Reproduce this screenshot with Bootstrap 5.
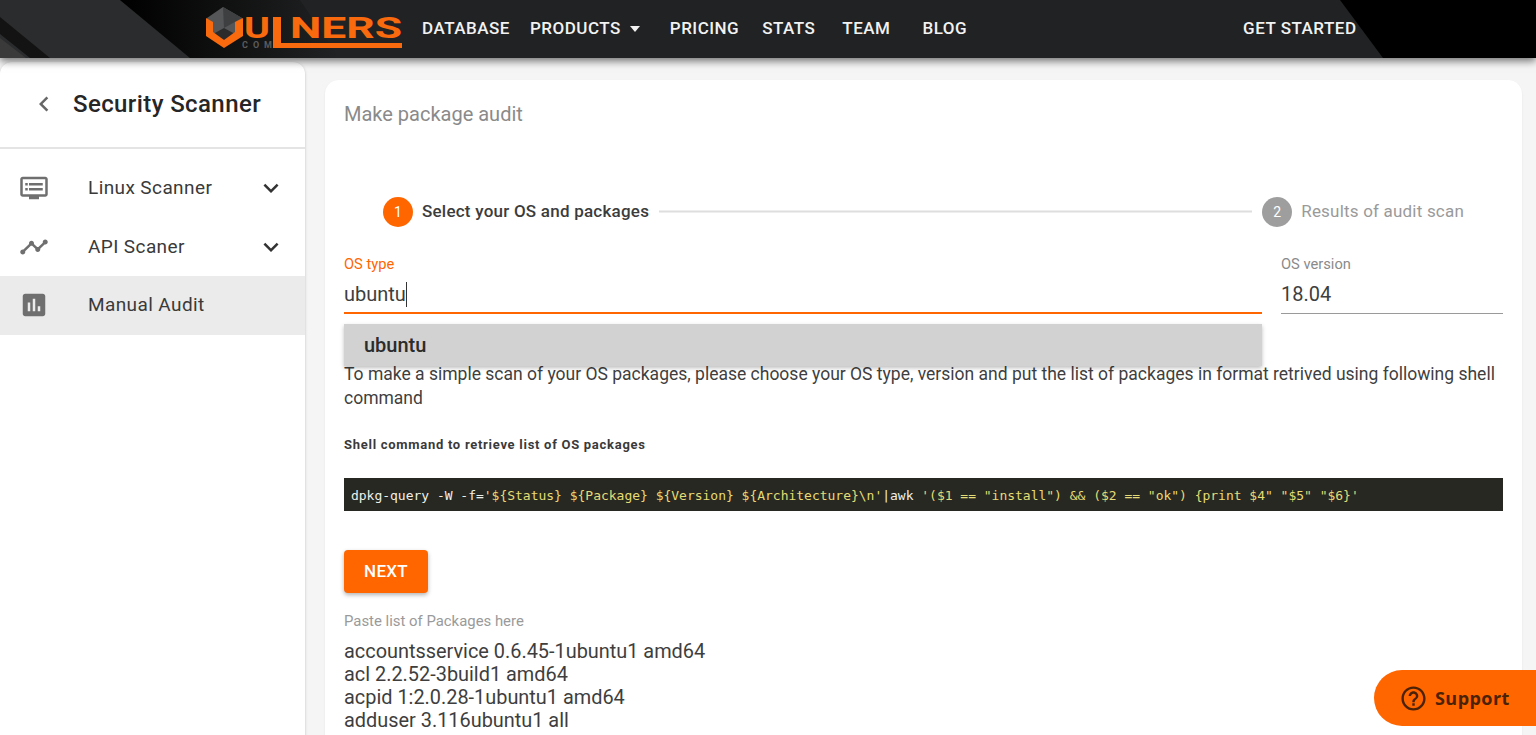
<!DOCTYPE html>
<html lang="en">
<head>
<meta charset="utf-8">
<title>Security Scanner</title>
<link href="https://cdn.jsdelivr.net/npm/bootstrap@5.3.0/dist/css/bootstrap.min.css" rel="stylesheet">
<style>
html,body{height:735px;overflow:hidden}
body{background:#f5f5f5;font-family:Roboto,"Liberation Sans",sans-serif;color:#333}
.topbar{height:58px;background:#212223;box-shadow:0 3px 8px rgba(0,0,0,.55);position:relative;z-index:5;padding-left:206px}
.topbar-art{position:absolute;left:0;top:0;width:100%;height:100%}
.brand-logo{position:relative;width:198px;height:50px;margin-top:3px;margin-right:18px;flex:none}
.top-link{position:relative;color:#f2f2f2;font-size:17px;letter-spacing:.5px;font-weight:500;text-transform:uppercase;text-decoration:none;line-height:57px;white-space:nowrap}
.top-link:hover{color:#fff}
.caret-down{display:inline-block;width:0;height:0;border-left:5.5px solid transparent;border-right:5.5px solid transparent;border-top:6px solid #f2f2f2;margin-left:9px;vertical-align:2px}
.gap-a{margin-right:20px}.gap-b{margin-right:30px}.gap-c{margin-right:23px}.gap-d{margin-right:27px}.gap-e{margin-right:32px}.gap-f{margin-right:276px}
.page-wrap{height:677px;overflow:hidden}
.side-panel{width:305px;flex:none;background:#fff;margin:4px 0 0 0;border-radius:12px 12px 0 0;box-shadow:0 1px 3px rgba(0,0,0,.22);height:700px}
.side-head{height:87px;border-bottom:2px solid #e4e4e4;padding:0 0 2px 29px;margin-bottom:10px}
.side-head svg{width:30px;height:30px;fill:#666;margin-right:14px}
.side-title{font-size:24px;font-weight:500;color:#262626;line-height:1;letter-spacing:.4px}
.side-item{height:58.5px;padding:0 24px 0 19px;color:#3a3a3a;font-size:19px;letter-spacing:.4px;text-decoration:none}
.side-item.is-active{background:#ebebeb}
.side-item:hover{color:#3a3a3a}
.side-ico{width:30px;height:30px;fill:#6f6f6f;margin-right:39px;flex:none}
.side-exp{width:30px;height:30px;fill:#333;margin-left:auto;margin-right:-4.5px}
.main-card{position:relative;margin:22px 14px 0 20px;flex:1;background:#fff;border-radius:14px;box-shadow:0 1px 2px rgba(0,0,0,.08);padding:22px 19px 0 19px;height:700px}
.audit-title{font-size:20px;color:#8a8a8a;line-height:24px;margin-bottom:71px}
.step-row{padding-left:39px;padding-right:39px;height:30px;margin-bottom:29px}
.step-num{width:30px;height:30px;border-radius:50%;color:#fff;font-size:14px;flex:none}
.step-on{background:#ff6600}.step-off{background:#9e9e9e}
.step-lbl{font-size:17px;font-weight:500;color:#3c3c3c;margin-left:9px;white-space:nowrap;letter-spacing:.23px}
.step-lbl.dim{font-weight:400;color:#9a9a9a;letter-spacing:.2px;margin-left:9px}
.step-line{flex:1;height:2px;background:#dedede;margin:0 10px;transform:translateY(-.5px)}
.fld-lbl{font-size:14.7px;line-height:16px;color:#8a8a8a;margin-bottom:8px}
.fld-lbl.is-on{color:#ff6600}
.fld-val{font-size:20px;line-height:28px;color:#3e3e3e;height:34px}
.fld-line{height:34px;border-bottom:1px solid #9a9a9a}
.fld-line.is-on{border-bottom:2px solid #ff6600}
.text-cursor{display:inline-block;width:1px;height:25px;background:#333;vertical-align:-6px}
.fld-os{width:918px;margin-right:19px;position:relative}
.fld-ver{flex:1}
.suggest{position:absolute;left:0;right:0;top:68px;height:42px;background:#d2d2d2;box-shadow:0 2px 4px rgba(0,0,0,.25);font-size:20px;font-weight:500;color:#2c2c2c;padding-left:20px;line-height:42px;z-index:3}
.intro-text{font-size:17.5px;line-height:24px;color:#3f3f3f;margin:48px 0 0}
.shell-head{font-size:13px;font-weight:700;color:#3a3a3a;margin:26px 0 0;line-height:18px;letter-spacing:.72px}
.shell-bar{background:#272822;color:#f0f0ea;font-family:"DejaVu Sans Mono","Liberation Mono",monospace;font-size:13px;letter-spacing:-.015px;height:33px;line-height:35px;padding-left:7px;margin:24px 0 0;white-space:nowrap;overflow:hidden;border-radius:0;border:0}
.shell-bar .str{color:#e6db74}
.next-btn{background:#ff6600;border:0;color:#fff;font-weight:500;font-size:17px;letter-spacing:.25px;width:84px;height:43px;border-radius:4px;box-shadow:0 2px 4px rgba(0,0,0,.3);margin-top:39px;display:block;padding:0}
.next-btn:hover{background:#ff6600;color:#fff}
.paste-lbl{font-size:14.9px;color:#9a9a9a;line-height:18px;margin-top:19px}
.pkg-list{font-size:19.9px;line-height:23px;color:#3e3e3e;margin-top:10px;white-space:pre}
.support-btn{position:fixed;left:1374px;top:670px;width:162px;height:56px;border-radius:28px 0 0 28px;background:#ff6600;color:#4b2205;font-family:"Open Sans","Noto Sans",sans-serif;font-weight:700;font-size:18px;letter-spacing:.45px;padding-left:25px;z-index:9;text-decoration:none}
.support-btn:hover{color:#4b2205}
.support-btn svg{width:29px;height:29px;fill:#4b2205;margin-right:7px}
</style>
</head>
<body>
<header class="topbar d-flex align-items-start">
  <svg class="topbar-art" viewBox="0 0 1536 58" preserveAspectRatio="none" aria-hidden="true">
    <defs><linearGradient id="fadeBlack" x1="0" x2="1" y1="0" y2="0"><stop offset="0" stop-color="#000"/><stop offset="1" stop-color="#212223"/></linearGradient></defs>
    <polygon points="0,0 120,0 190,58 0,58" fill="#2b2c2d"/>
    <polygon points="120,0 300,0 340,58 190,58" fill="url(#fadeBlack)"/>
    <polygon points="0,17 50,58 30,58 0,34" fill="#131313"/>
    <polygon points="0,38 26,58 0,58" fill="#3a3a3a"/>
    <polygon points="1340,0 1536,0 1536,58 1383,58" fill="#000"/>
  </svg>
  <svg class="brand-logo" viewBox="0 0 198 50" role="img" aria-label="Vulners">
    <polygon points="17,4 36,15 36,30 18,40 1,30 1,15" fill="#555657"/>
    <polygon points="17,4 36,15 18,25" fill="#3e3f40"/>
    <polygon points="18,25 29,31 18,38 7,31" fill="#2b2b2c"/>
    <polygon points="0,15 7,19 7,29 18,37 29,29 29,19 37,15 37,33 18,45 0,33" fill="#f96a0e"/>
    <text x="38" y="35" font-family="Roboto,sans-serif" font-weight="700" font-size="29" fill="#f96a0e" textLength="26" lengthAdjust="spacingAndGlyphs">U</text>
    <polygon points="67,14 75,14 75,40 196,40 196,45 67,45" fill="#f96a0e"/>
    <text x="84" y="35" font-family="Roboto,sans-serif" font-weight="700" font-size="29" fill="#f96a0e" textLength="112" lengthAdjust="spacingAndGlyphs">NERS</text>
    <text x="36" y="45" font-family="Roboto,sans-serif" font-weight="700" font-size="9" fill="#5c5c5c" textLength="30" lengthAdjust="spacing">COM</text>
  </svg>
  <a class="top-link gap-a" href="#">Database</a>
  <a class="top-link gap-b" href="#">Products<span class="caret-down"></span></a>
  <a class="top-link gap-c" href="#">Pricing</a>
  <a class="top-link gap-d" href="#">Stats</a>
  <a class="top-link gap-e" href="#">Team</a>
  <a class="top-link gap-f" href="#">Blog</a>
  <a class="top-link" href="#">Get started</a>
</header>
<div class="page-wrap d-flex">
  <aside class="side-panel">
    <div class="side-head d-flex align-items-center">
      <svg viewBox="0 0 24 24"><path d="M15.41 7.41L14 6l-6 6 6 6 1.41-1.41L10.83 12z"/></svg>
      <span class="side-title">Security Scanner</span>
    </div>
    <nav class="d-flex flex-column">
      <a class="side-item d-flex align-items-center" href="#">
        <svg class="side-ico" viewBox="0 0 24 24"><path d="M21 3H3c-1.1 0-2 .9-2 2v12c0 1.1.9 2 2 2h5v2h8v-2h5c1.1 0 1.99-.9 1.99-2L23 5c0-1.1-.9-2-2-2zm0 14H3V5h18v12zm-2-9H8v2h11V8zm0 4H8v2h11v-2zM7 8H5v2h2V8zm0 4H5v2h2v-2z"/></svg>
        Linux Scanner
        <svg class="side-exp" viewBox="0 0 24 24"><path d="M16.59 8.59L12 13.17 7.41 8.59 6 10l6 6 6-6z"/></svg>
      </a>
      <a class="side-item d-flex align-items-center" href="#">
        <svg class="side-ico" viewBox="0 0 24 24"><path d="M23 8c0 1.1-.9 2-2 2-.18 0-.35-.02-.51-.07l-3.56 3.55c.05.16.07.34.07.52 0 1.1-.9 2-2 2s-2-.9-2-2c0-.18.02-.36.07-.52l-2.55-2.55c-.16.05-.34.07-.52.07s-.36-.02-.52-.07l-4.55 4.56c.05.16.07.33.07.51 0 1.1-.9 2-2 2s-2-.9-2-2 .9-2 2-2c.18 0 .35.02.51.07l4.56-4.55C8.02 9.36 8 9.18 8 9c0-1.1.9-2 2-2s2 .9 2 2c0 .18-.02.36-.07.52l2.55 2.55c.16-.05.34-.07.52-.07s.36.02.52.07l3.55-3.56C19.02 8.35 19 8.18 19 8c0-1.1.9-2 2-2s2 .9 2 2z"/></svg>
        API Scaner
        <svg class="side-exp" viewBox="0 0 24 24"><path d="M16.59 8.59L12 13.17 7.41 8.59 6 10l6 6 6-6z"/></svg>
      </a>
      <a class="side-item is-active d-flex align-items-center" href="#">
        <svg class="side-ico" viewBox="0 0 24 24"><path d="M19 3H5c-1.1 0-2 .9-2 2v14c0 1.1.9 2 2 2h14c1.1 0 2-.9 2-2V5c0-1.1-.9-2-2-2zM9 17H7v-7h2v7zm4 0h-2V7h2v10zm4 0h-2v-4h2v4z"/></svg>
        Manual Audit
      </a>
    </nav>
  </aside>
  <main class="main-card">
    <div class="audit-title">Make package audit</div>
    <div class="step-row d-flex align-items-center">
      <span class="step-num step-on d-flex align-items-center justify-content-center">1</span>
      <span class="step-lbl">Select your OS and packages</span>
      <span class="step-line"></span>
      <span class="step-num step-off d-flex align-items-center justify-content-center">2</span>
      <span class="step-lbl dim">Results of audit scan</span>
    </div>
    <div class="d-flex">
      <div class="fld-os">
        <div class="fld-lbl is-on">OS type</div>
        <div class="fld-val fld-line is-on">ubuntu<span class="text-cursor"></span></div>
        <div class="suggest">ubuntu</div>
      </div>
      <div class="fld-ver">
        <div class="fld-lbl">OS version</div>
        <div class="fld-val fld-line">18.04</div>
      </div>
    </div>
    <p class="intro-text">To make a simple scan of your OS packages, please choose your OS type, version and put the list of packages in format retrived using following shell command</p>
    <p class="shell-head">Shell command to retrieve list of OS packages</p>
    <pre class="shell-bar">dpkg-query -W -f=<span class="str">'${Status} ${Package} ${Version} ${Architecture}\n'</span>|awk <span class="str">'($1 == "install") &amp;&amp; ($2 == "ok") {print $4" "$5" "$6}'</span></pre>
    <button type="button" class="btn next-btn">NEXT</button>
    <div class="paste-lbl">Paste list of Packages here</div>
    <div class="pkg-list">accountsservice 0.6.45-1ubuntu1 amd64
acl 2.2.52-3build1 amd64
acpid 1:2.0.28-1ubuntu1 amd64
adduser 3.116ubuntu1 all
apparmor 2.12-4ubuntu5 amd64</div>
  </main>
</div>
<a class="support-btn d-flex align-items-center" href="#">
  <svg viewBox="0 0 24 24"><path d="M11 18h2v-2h-2v2zm1-16C6.48 2 2 6.48 2 12s4.48 10 10 10 10-4.48 10-10S17.52 2 12 2zm0 18c-4.41 0-8-3.59-8-8s3.59-8 8-8 8 3.59 8 8-3.59 8-8 8zm0-14c-2.21 0-4 1.79-4 4h2c0-1.1.9-2 2-2s2 .9 2 2c0 2-3 1.75-3 5h2c0-2.25 3-2.5 3-5 0-2.21-1.79-4-4-4z"/></svg>
  Support
</a>
<script src="https://cdn.jsdelivr.net/npm/bootstrap@5.3.0/dist/js/bootstrap.bundle.min.js"></script>
</body>
</html>
